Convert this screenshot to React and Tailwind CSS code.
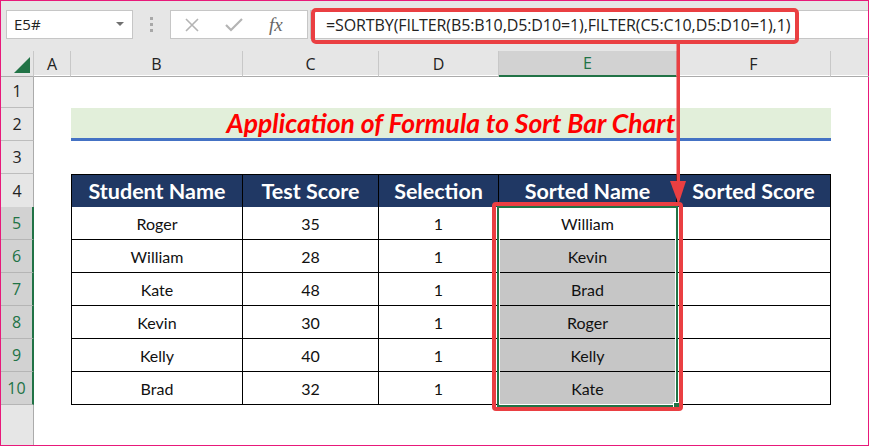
import React from "react";

const COLS = "grid-cols-[33px_37px_172px_136px_120px_178px_154px_38px]";
const ui = { fontFamily: '"Open Sans", "Noto Sans", sans-serif' };
const cal = { fontFamily: 'Lato, "Noto Sans", sans-serif' };

const data = [
  ["Roger", "35", "1", "William"],
  ["William", "28", "1", "Kevin"],
  ["Kate", "48", "1", "Brad"],
  ["Kevin", "30", "1", "Roger"],
  ["Kelly", "40", "1", "Kelly"],
  ["Brad", "32", "1", "Kate"],
];

function RowHead({ n, sel }) {
  return (
    <div
      className={
        "flex items-center justify-center text-[16px] border-b " +
        (sel
          ? "bg-[#d2d2d2] text-[#217346] border-b-[#b5b5b5] border-r-2 border-r-[#217346]"
          : "bg-[#e6e6e6] text-[#222] border-b-[#bdbdbd] border-r border-r-[#ababab]")
      }
      style={ui}
    >
      {n}
    </div>
  );
}

export default function App() {
  return (
    <div className="relative w-[870px] h-[446px] overflow-hidden bg-white">
      <div className="w-[869px] h-[446px] border border-[#e8197a] flex flex-col">
        {/* Toolbar */}
        <div className="h-[50px] bg-[#e6e6e6] flex items-start pt-[9px] pl-[5px] shrink-0">
          <div className="w-[127px] h-[29px] bg-white border border-[#c6c6c6] flex items-center justify-between pl-[7px] pr-[8px]">
            <span className="text-[15px] text-[#222]" style={ui}>E5#</span>
            <svg width="8" height="5" viewBox="0 0 8 5"><path d="M0 0h8L4 4z" fill="#707070" /></svg>
          </div>
          <div className="w-[37px] h-[29px] flex flex-col items-center justify-center gap-[3px]">
            <div className="w-[3px] h-[3px] bg-[#a8a8a8]" />
            <div className="w-[3px] h-[3px] bg-[#a8a8a8]" />
            <div className="w-[3px] h-[3px] bg-[#a8a8a8]" />
          </div>
          <div className="w-[138px] h-[29px] bg-white border border-[#c6c6c6] flex items-center pl-[14px] gap-[26px]">
            <svg width="14" height="14" viewBox="0 0 14 14"><path d="M1 1l12 12M13 1L1 13" stroke="#b4b4b4" strokeWidth="1.6" /></svg>
            <svg width="18" height="14" viewBox="0 0 18 14"><path d="M1 7l5 5L17 1" stroke="#b4b4b4" strokeWidth="2.2" fill="none" /></svg>
            <span className="text-[19px] italic text-[#666] leading-none" style={{ fontFamily: '"Liberation Serif", serif' }}>fx</span>
          </div>
          <div className="ml-[2px] flex-1 h-[29px] bg-white border-y border-l border-[#c6c6c6] flex items-center pl-[15px]">
            <span className="text-[16px] text-[#222] whitespace-nowrap tracking-[-0.1px]" style={ui}>
              =SORTBY(FILTER(B5:B10,D5:D10=1),FILTER(C5:C10,D5:D10=1),1)
            </span>
          </div>
        </div>

        {/* Column headers */}
        <div className={"grid h-[24px] shrink-0 bg-[#e6e6e6] " + COLS} style={ui}>
          <div className="relative border-b border-[#ababab] border-r border-r-[#c8c8c8]">
            <svg className="absolute right-[3px] bottom-[3px]" width="16" height="16" viewBox="0 0 16 16"><path d="M16 0V16H0z" fill="#217346" /></svg>
          </div>
          {["A", "B", "C", "D"].map((c) => (
            <div key={c} className="flex items-center justify-center text-[16px] text-[#222] border-b border-[#ababab] border-r border-r-[#c8c8c8]">{c}</div>
          ))}
          <div className="flex items-center justify-center text-[16px] text-[#217346] bg-[#d2d2d2] border-b-2 border-[#217346] border-r border-r-[#c8c8c8]">E</div>
          <div className="flex items-center justify-center text-[16px] text-[#222] border-b border-[#ababab] border-r border-r-[#c8c8c8]">F</div>
          <div className="border-b border-[#ababab]" />
        </div>

        {/* Body */}
        <div className="flex flex-col flex-1">
          {/* Row 1 */}
          <div className={"grid h-[33px] " + COLS}>
            <RowHead n="1" />
          </div>
          {/* Row 2 */}
          <div className={"grid h-[33px] " + COLS}>
            <RowHead n="2" />
            <div />
            <div className="col-span-5 bg-[#e2efda] border-b-[3px] border-[#4472c4] flex items-center justify-center">
              <span className="text-[26.5px] font-bold italic text-[#ff0000] leading-none" style={cal}>
                Application of Formula to Sort Bar Chart
              </span>
            </div>
          </div>
          {/* Row 3 */}
          <div className={"grid h-[33px] " + COLS}>
            <RowHead n="3" />
          </div>
          {/* Row 4 header */}
          <div className={"grid h-[33px] " + COLS}>
            <RowHead n="4" />
            <div />
            {["Student Name", "Test Score", "Selection", "Sorted Name", "Sorted Score"].map((h, i) => (
              <div
                key={h}
                className={
                  "bg-[#203864] text-white font-bold text-[21.5px] flex items-center justify-center border-t border-b border-r border-black " +
                  (i === 0 ? "border-l" : "")
                }
                style={cal}
              >
                {h}
              </div>
            ))}
          </div>
          {/* Data rows */}
          {data.map((r, ri) => (
            <div key={ri} className={"grid h-[33px] " + COLS}>
              <RowHead n={String(ri + 5)} sel />
              <div />
              {[r[0], r[1], r[2], r[3], ""].map((v, ci) => (
                <div
                  key={ci}
                  className={
                    "flex items-center justify-center pt-[1px] text-[16px] text-[#111] border-b border-r border-black " +
                    (ci === 0 ? "border-l " : "") +
                    (ci === 3 && ri > 0 ? "bg-[#c6c6c6]" : "bg-white")
                  }
                  style={cal}
                >
                  {v}
                </div>
              ))}
            </div>
          ))}
          {/* Remaining */}
          <div className={"grid flex-1 " + COLS}>
            <div className="bg-[#e6e6e6] border-r border-[#ababab]" />
          </div>
        </div>
      </div>

      {/* Selection border */}
      <div className="absolute left-[497px] top-[206px] w-[181px] h-[201px] border-2 border-[#217346] pointer-events-none">
        <div className="w-full h-full border border-white" />
      </div>
      <div className="absolute left-[673px] top-[402px] w-[7px] h-[7px] bg-[#217346] border border-white" />

      {/* Red highlight boxes */}
      <div className="absolute left-[311px] top-[8px] w-[488px] h-[36px] border-[4px] border-[#ea3f42] rounded-[5px]" />
      <div className="absolute left-[492px] top-[202px] w-[191px] h-[209px] border-[4px] border-[#ea3f42] rounded-[4px]" />

      {/* Arrow */}
      <svg className="absolute left-[668px] top-[43px]" width="20" height="162" viewBox="0 0 20 162">
        <rect x="8.5" y="0" width="3.5" height="145" fill="#ea3f42" />
        <path d="M2 138L18 138L10.5 161z" fill="#ea3f42" />
      </svg>
    </div>
  );
}
